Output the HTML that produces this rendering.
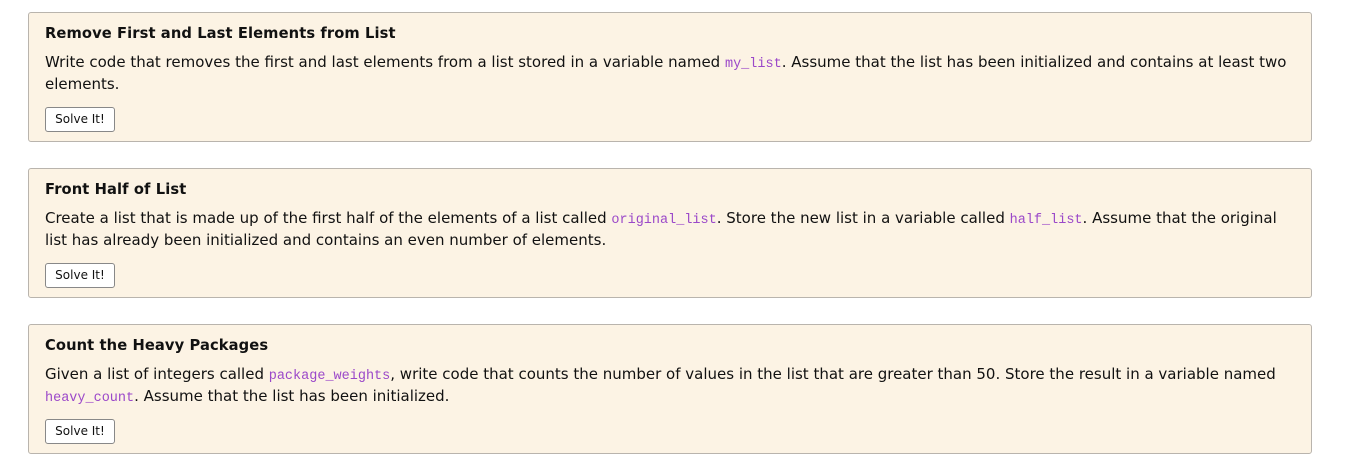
<!DOCTYPE html>
<html><head><style>
body{margin:0;background:#fff;font-family:"DejaVu Sans","Liberation Sans",sans-serif;color:#111;}
.box{position:absolute;left:28px;width:1282px;height:128px;background:#fcf3e4;border:1px solid #b9b4ad;border-radius:3px;box-sizing:content-box;}
.box h3{position:absolute;left:16px;top:12px;margin:0;font-size:14.7px;font-weight:bold;letter-spacing:0.1px;}
.box p{position:absolute;left:16px;top:38px;width:1255px;margin:0;font-size:15px;line-height:22px;}
code{font-family:"Liberation Mono",monospace;font-size:13.5px;color:#9b48c9;line-height:1;}
.btn{position:absolute;left:16px;top:94px;width:68px;height:23px;border:1px solid #888;border-radius:3px;background:#fff;font-size:12px;line-height:23px;text-align:center;}
</style></head><body>
<div class="box" style="top:12px">
<h3>Remove First and Last Elements from List</h3>
<p>Write code that removes the first and last elements from a list stored in a variable named <code>my_list</code>. Assume that the list has been initialized and contains at least two elements.</p>
<div class="btn">Solve It!</div></div>
<div class="box" style="top:168px">
<h3>Front Half of List</h3>
<p>Create a list that is made up of the first half of the elements of a list called <code>original_list</code>. Store the new list in a variable called <code>half_list</code>. Assume that the original list has already been initialized and contains an even number of elements.</p>
<div class="btn">Solve It!</div></div>
<div class="box" style="top:324px">
<h3>Count the Heavy Packages</h3>
<p>Given a list of integers called <code>package_weights</code>, write code that counts the number of values in the list that are greater than 50. Store the result in a variable named <code>heavy_count</code>. Assume that the list has been initialized.</p>
<div class="btn">Solve It!</div></div>
</body></html>
